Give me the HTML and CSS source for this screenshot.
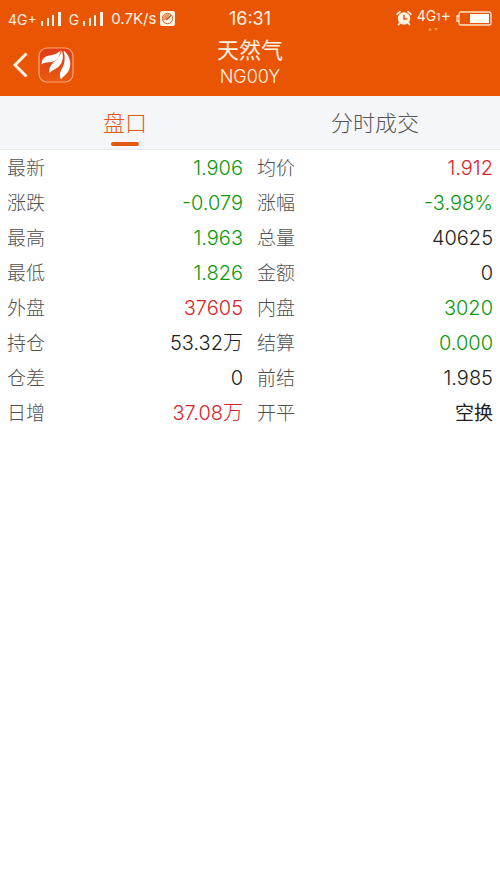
FILE: index.html
```html
<!DOCTYPE html>
<html lang="zh-CN">
<head>
<meta charset="utf-8">
<meta name="viewport" content="width=device-width, initial-scale=1">
<title>天然气 NG00Y</title>
<link rel="stylesheet" href="styles.css">
</head>
<body>
<header class="top">
  <div class="status">
    <div class="status-side">
      <span class="carrier">4G+</span>
      <svg class="signal" width="20" height="15" viewBox="0 0 20 15" aria-hidden="true"><path d="M0 10h2v5H0zM6 7h2v8H6zM11 4h2v11h-2zM17 1h3v14h-3z"/></svg>
      <span class="carrier second">G</span>
      <svg class="signal" width="20" height="15" viewBox="0 0 20 15" aria-hidden="true"><path d="M0 10h2v5H0zM6 7h2v8H6zM11 4h2v11h-2zM17 1h3v14h-3z"/></svg>
      <span class="speed">0.7K/s</span>
      <svg width="15" height="15" viewBox="0 0 15 15" aria-hidden="true"><rect width="15" height="15" rx="2" fill="#fff3e4"/><circle cx="7.500" cy="7.500" r="5.200" fill="#fff3e4" stroke="#c66a3a" stroke-width="1"/><path d="M3 9.500A5 5 0 0 1 10 3.500L6 9z" fill="#e9965f"/><path d="M6.500 8.800L10.800 4.500" stroke="#b34814" stroke-width="1.300"/></svg>
    </div>
    <time class="clock">16:31</time>
    <div class="status-side end">
      <svg class="alarm" width="16" height="16" viewBox="0 0 16 16" aria-hidden="true"><circle cx="8" cy="8.500" r="6.200" fill="#fff3e4"/><path d="M1.200 4.200L4 1.600M14.800 4.200L12 1.600M3.600 13.200L2.600 14.600M12.400 13.200l1 1.400" stroke="#fff3e4" stroke-width="1.800" stroke-linecap="round"/><path d="M8 4.800V9h3.200" fill="none" stroke="#ea5504" stroke-width="1.400"/></svg>
      <span class="network">4G<small>1</small><span class="plus">+</span><svg class="traffic" width="12" height="4" viewBox="0 0 12 4" aria-hidden="true"><path d="M1 3.500L3 .5l2 3zM7 1h4L9 4z" fill="#ff9a4e"/></svg></span>
      <svg width="36" height="15" viewBox="0 0 36 15" aria-hidden="true"><rect x="3" y="1" width="32" height="13" rx="2" fill="none" stroke="#ffe3c8" stroke-width="1.300"/><path d="M3 5H1v5h2" fill="none" stroke="#ffe3c8" stroke-width="1.300"/><path d="M14 3h19v9H14z" fill="#fff"/></svg>
    </div>
  </div>
  <div class="titlebar">
    <div class="nav">
      <button class="back" type="button" aria-label="返回"><svg width="16" height="26" viewBox="0 0 16 26" aria-hidden="true"><path d="M14.500 1.500L3 13l11.500 11.500" fill="none" stroke="#fff3e4" stroke-width="3"/></svg></button>
      <a class="logo" href="#" aria-label="首页"><svg width="36" height="36" viewBox="0 0 36 36" aria-hidden="true"><defs><linearGradient id="tile" x2="0" y2="1"><stop stop-color="#df3c18"/><stop offset="1" stop-color="#ea5a12"/></linearGradient></defs><rect x="1" y="1" width="34" height="34" rx="8" fill="url(#tile)" stroke="#ffa577" stroke-width="1.200"/><path d="M3.500 17.500C3.500 12 7 9 12 8.500C16.500 8 20 6 22.500 3.500C22 9.500 18.500 14 13.500 15C9 15.500 5.500 15.500 3.500 17.500z" fill="#fff"/><path d="M11.500 26C10.500 21 13 17.500 17 14C20.500 10.500 23 7.500 23.800 3.500C26 9.500 24.800 16 20.500 19.800C17 22.500 13.500 23.500 11.500 26z" fill="#fff"/><path d="M23 32.500C21 28.500 22 24.500 24.500 20.500C27 16 27.300 9.500 25.500 3.500C31.500 8 34 16 31 23C29 27.500 25 29 23 32.500z" fill="#fff"/></svg></a>
    </div>
    <div class="heading">
      <h1>天然气</h1>
      <p>NG00Y</p>
    </div>
  </div>
</header>
<nav class="tabs" role="tablist">
  <button class="tab active" type="button" role="tab" aria-selected="true">盘口</button>
  <button class="tab" type="button" role="tab" aria-selected="false">分时成交</button>
</nav>
<main>
  <table class="quotes">
    <tbody>
      <tr><th scope="row">最新</th><td class="down">1.906</td><th scope="row">均价</th><td class="up">1.912</td></tr>
      <tr><th scope="row">涨跌</th><td class="down">-0.079</td><th scope="row">涨幅</th><td class="down">-3.98%</td></tr>
      <tr><th scope="row">最高</th><td class="down">1.963</td><th scope="row">总量</th><td>40625</td></tr>
      <tr><th scope="row">最低</th><td class="down">1.826</td><th scope="row">金额</th><td>0</td></tr>
      <tr><th scope="row">外盘</th><td class="up">37605</td><th scope="row">内盘</th><td class="down">3020</td></tr>
      <tr><th scope="row">持仓</th><td>53.32万</td><th scope="row">结算</th><td class="down">0.000</td></tr>
      <tr><th scope="row">仓差</th><td>0</td><th scope="row">前结</th><td>1.985</td></tr>
      <tr><th scope="row">日增</th><td class="up">37.08万</td><th scope="row">开平</th><td class="text">空换</td></tr>
    </tbody>
  </table>
</main>
</body>
</html>
```
FILE: styles.css
```css
* {
  box-sizing: border-box;
}

body {
  margin: 0;
  background: #fff;
  color: #222;
  font-family: Inter, "Noto Sans CJK SC", sans-serif;
  font-weight: 300;
}

button {
  padding: 0;
  border: 0;
  background: none;
  font: inherit;
  color: inherit;
}

svg {
  display: block;
  flex: none;
}

.top {
  background: #ea5504;
  color: #fff3e4;
}

.status {
  display: grid;
  grid-template-columns: 1fr auto 1fr;
  align-items: center;
  height: 36px;
  padding: 0 8px;
  font-weight: 400;
}

.status-side {
  display: flex;
  align-items: center;
  white-space: nowrap;
}

.end {
  justify-content: flex-end;
  gap: 5px;
}

.carrier {
  padding-top: 3px;
  margin-right: 4px;
  font-size: 14px;
}

.second {
  margin-left: 8px;
}

.signal {
  fill: #fff3e4;
}

.speed {
  margin: 0 4px 0 8px;
  font-size: 15px;
}

.clock {
  font-size: 18px;
}

.network {
  position: relative;
  padding-bottom: 5px;
  font-size: 14px;
  line-height: 18px;
}

.network small {
  font-size: 10px;
}

.plus {
  font-size: 16px;
}

.traffic {
  position: absolute;
  bottom: 0;
  left: 10px;
}

.titlebar {
  display: grid;
  grid-template-columns: 1fr auto 1fr;
  height: 60px;
  padding: 0 12px;
}

.nav {
  display: flex;
  align-items: center;
  gap: 10px;
  height: 58px;
}

.heading {
  text-align: center;
}

.heading h1 {
  margin: 0;
  font-size: 22px;
  font-weight: 400;
  line-height: 28px;
}

.heading p {
  margin: 0;
  font-size: 18px;
  line-height: 26px;
}

.tabs {
  display: flex;
  height: 54px;
  border-bottom: 1px solid #e8eaec;
  background: #f5f6f9;
}

.tab {
  position: relative;
  flex: 1;
  padding-bottom: 3px;
  color: #555;
  font-size: 22px;
}

.active {
  color: #e25a12;
}

.active::after {
  content: "";
  position: absolute;
  bottom: 3px;
  left: calc(50% - 14px);
  width: 28px;
  height: 4px;
  border-radius: 2px;
  background: #e25a12;
}

main {
  padding-top: 1px;
}

.quotes {
  width: 100%;
  table-layout: fixed;
  border-collapse: collapse;
  font-size: 20px;
  line-height: 35px;
}

.quotes th,
.quotes td {
  height: 35px;
  padding: 0 7px;
}

.quotes th {
  width: 20%;
  color: #505050;
  font-size: 19px;
  font-weight: 300;
  text-align: left;
}

.quotes td {
  width: 30%;
  font-feature-settings: "case";
  text-align: right;
}

.quotes .text {
  font-size: 19px;
  font-weight: 400;
}

.quotes .up {
  color: #d8232c;
}

.quotes .down {
  color: #0c970c;
}
```
